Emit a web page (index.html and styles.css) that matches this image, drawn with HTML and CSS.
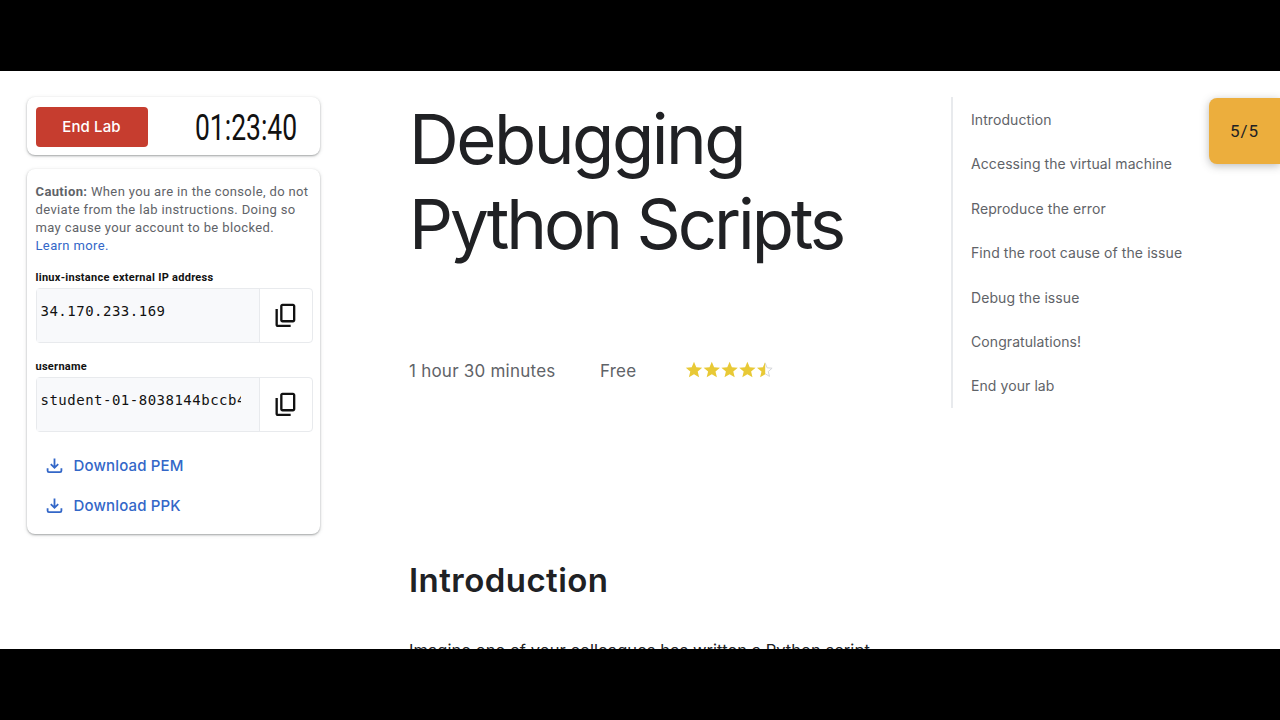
FILE: index.html
```html
<!DOCTYPE html>
<html lang="en">
<head>
    <meta charset="UTF-8">
    <meta name="viewport" content="width=device-width, initial-scale=1.0">
    <title>Debugging Python Scripts</title>
    <link rel="stylesheet" href="styles.css">
</head>
<body>
    <div class="lab">
        <aside class="sidebar">
            <div class="card timer-card">
                <button class="end-lab">End Lab</button>
                <span class="timer">01:23:40</span>
            </div>
            <div class="card details-card">
                <p class="caution"><b>Caution:</b> When you are in the console, do not<br>deviate from the lab instructions. Doing so<br>may cause your account to be blocked.<br><a href="#">Learn more.</a></p>

                <div class="field-label">linux-instance external IP address</div>
                <div class="field">
                    <div class="field-value"><span>34.170.233.169</span></div>
                    <button class="copy" aria-label="Copy">
                        <svg viewBox="0 0 24 24"><path d="M16 19.500v2H5c-1.100 0-2-.9-2-2V6h2v13.500zM20 3.500v12c0 1.100-.9 2-2 2H9c-1.100 0-2-.9-2-2v-12c0-1.100.9-2 2-2h9c1.100 0 2 .9 2 2zm-2 0H9v12h9z"/></svg>
                    </button>
                </div>

                <div class="field-label">username</div>
                <div class="field">
                    <div class="field-value"><span>student-01-8038144bccb4</span></div>
                    <button class="copy" aria-label="Copy">
                        <svg viewBox="0 0 24 24"><path d="M16 19.500v2H5c-1.100 0-2-.9-2-2V6h2v13.500zM20 3.500v12c0 1.100-.9 2-2 2H9c-1.100 0-2-.9-2-2v-12c0-1.100.9-2 2-2h9c1.100 0 2 .9 2 2zm-2 0H9v12h9z"/></svg>
                    </button>
                </div>

                <div class="downloads">
                    <a href="#">
                        <svg viewBox="0 0 16 16"><path d="M8 1.500v8.500M4.500 6.700 8 10.200l3.500-3.500M1.500 10.500v2.400c0 .8.500 1.300 1.300 1.300h10.400c.8 0 1.300-.5 1.300-1.300v-2.400"/></svg>
                        <span>Download PEM</span>
                    </a>
                    <a href="#">
                        <svg viewBox="0 0 16 16"><path d="M8 1.500v8.500M4.500 6.700 8 10.200l3.500-3.500M1.500 10.500v2.400c0 .8.500 1.300 1.300 1.300h10.400c.8 0 1.300-.5 1.300-1.300v-2.400"/></svg>
                        <span>Download PPK</span>
                    </a>
                </div>
            </div>
        </aside>

        <main class="content">
            <h1>Debugging<br><span class="tight">Python Scripts</span></h1>
            <div class="meta">
                <span class="duration">1 hour 30 minutes</span>
                <span class="price">Free</span>
                <svg class="stars" viewBox="0 0 90 18">
                    <defs>
                        <path id="star" d="M9 .8l2.300 5.400 5.900.5-4.500 3.900 1.400 5.700L9 13.300l-5.100 3 1.400-5.700L.8 6.700l5.900-.5z"/>
                        <clipPath id="half"><rect width="9" height="18"/></clipPath>
                    </defs>
                    <use href="#star" x="0"/>
                    <use href="#star" x="17.800"/>
                    <use href="#star" x="35.600"/>
                    <use href="#star" x="53.400"/>
                    <g transform="translate(71.200 0)">
                        <path class="star-empty" d="M9 2.100l1.900 4.700 5 .4-3.800 3.300 1.200 4.900L9 12.700"/>
                        <use href="#star" clip-path="url(#half)"/>
                    </g>
                </svg>
            </div>
            <h2>Introduction</h2>
            <p class="intro">Imagine one of your colleagues has written a Python script</p>
        </main>

        <nav class="outline">
            <a href="#">Introduction</a>
            <a href="#">Accessing the virtual machine</a>
            <a href="#">Reproduce the error</a>
            <a href="#">Find the root cause of the issue</a>
            <a href="#">Debug the issue</a>
            <a href="#">Congratulations!</a>
            <a href="#">End your lab</a>
        </nav>

        <div class="score">5/5</div>
    </div>
</body>
</html>
```
FILE: styles.css
```css
:root {
    --text-color: #202124;
    --muted-color: #5f6368;
    --link-color: #3367c8;
    --border-color: #e8eaed;
}

* {
    box-sizing: border-box;
}

body {
    margin: 0;
    height: 720px;
    padding: 71px 0;
    background-color: #000;
    color: var(--text-color);
    font-family: Inter, sans-serif;
    overflow: hidden;
}

a {
    color: var(--link-color);
    text-decoration: none;
}

button {
    border: none;
    cursor: pointer;
}

.lab {
    display: flex;
    align-items: flex-start;
    position: relative;
    height: 578px;
    padding: 26px 0 0 26.5px;
    background-color: #fff;
    overflow: hidden;
}

/* left panel */
.sidebar {
    width: 293.5px;
    flex: none;
}

.card {
    border-radius: 8px;
    background-color: #fff;
    box-shadow: 0 1px 2px rgba(60, 64, 67, 0.4), 0 1px 4px rgba(60, 64, 67, 0.15);
}

.timer-card {
    display: flex;
    align-items: center;
    justify-content: space-between;
    height: 58px;
    padding: 1px 23px 0 9px;
}

.end-lab {
    width: 112px;
    height: 40px;
    padding: 0;
    border-radius: 4px;
    background-color: #c63d2f;
    color: #fff;
    font: 500 15px Inter, sans-serif;
    letter-spacing: 0.1px;
}

.timer {
    width: 102px;
    padding-top: 3px;
    color: #111;
    font: 400 36px Roboto, sans-serif;
    white-space: nowrap;
    transform: scaleX(0.735);
    transform-origin: left center;
}

.details-card {
    height: 365px;
    margin-top: 14px;
    padding: 14px 7.5px 0 9px;
}

.caution {
    margin: 0 0 15px;
    color: var(--muted-color);
    font: 13px/18px Roboto, sans-serif;
    letter-spacing: 0.37px;
    white-space: nowrap;
}

.field-label {
    height: 18px;
    color: #111;
    font: bold 11px/16px Roboto, sans-serif;
    letter-spacing: 0.28px;
}

.field {
    display: flex;
    height: 55px;
    margin-bottom: 16px;
    border: 1px solid var(--border-color);
    border-radius: 4px;
}

.field-value {
    width: 222px;
    padding: 12px 18px 0 4px;
    background-color: #f8f9fb;
    color: #111;
    font: 14px/20px "DejaVu Sans Mono", monospace;
    letter-spacing: 0.5px;
    white-space: nowrap;
}

.field-value span {
    display: block;
    overflow: hidden;
}

.copy {
    display: flex;
    flex: 1;
    align-items: center;
    justify-content: center;
    padding: 0;
    border-left: 1px solid var(--border-color);
    background-color: transparent;
}

.copy svg {
    width: 28px;
    height: 28px;
    fill: #111;
}

.downloads {
    margin-top: -3px;
}

.downloads a {
    display: flex;
    align-items: center;
    gap: 11px;
    height: 40px;
    padding-left: 10px;
    font-size: 15px;
    font-weight: 500;
    letter-spacing: 0.15px;
}

.downloads svg {
    width: 17px;
    height: 17px;
    fill: none;
    stroke: var(--link-color);
    stroke-width: 1.7;
}

/* lab text */
.content {
    width: 480px;
    margin-left: 89px;
    flex: none;
    white-space: nowrap;
}

h1 {
    margin: 0;
    font-size: 69px;
    font-weight: 400;
    line-height: 85px;
    letter-spacing: -2.5px;
}

h1 .tight {
    letter-spacing: -3.05px;
}

.meta {
    display: flex;
    align-items: center;
    height: 24px;
    margin-top: 92px;
    color: var(--muted-color);
    font-size: 17px;
    letter-spacing: 0.23px;
}

.duration {
    width: 191px;
}

.price {
    width: 85px;
}

.stars {
    width: 90px;
    height: 18px;
    margin-bottom: 2px;
    fill: #e8c936;
}

.stars .star-empty {
    fill: none;
    stroke: #d5d7da;
}

h2 {
    margin: 177px 0 0;
    font-size: 33px;
    font-weight: 600;
    line-height: 40px;
    letter-spacing: 0.45px;
}

.intro {
    margin: 38px 0 0;
    font-size: 16.5px;
    line-height: 24px;
    letter-spacing: 0.06px;
}

/* steps on the right */
.outline {
    display: flex;
    flex-direction: column;
    width: 240px;
    height: 311px;
    margin-left: 62px;
    padding-left: 18px;
    border-left: 2px solid var(--border-color);
}

.outline a {
    height: 44.4px;
    color: var(--muted-color);
    font-size: 14px;
    line-height: 45px;
    letter-spacing: 0.08px;
    white-space: nowrap;
}

.score {
    position: absolute;
    top: 27px;
    right: 0;
    width: 71px;
    height: 66px;
    border-radius: 8px 0 0 8px;
    background-color: #ecae3d;
    box-shadow: 0 2px 8px rgba(60, 64, 67, 0.35);
    font: 17px/67px Roboto, sans-serif;
    letter-spacing: 1px;
    text-align: center;
}
```
